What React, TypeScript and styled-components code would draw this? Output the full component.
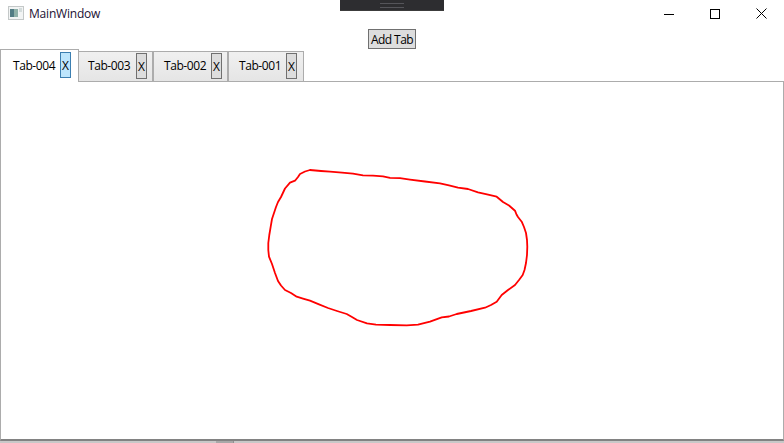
import React from "react";
import styled, { createGlobalStyle } from "styled-components";

const Global = createGlobalStyle`
  html, body { margin: 0; padding: 0; background: #fff; overflow: hidden; }
  #root { width: 784px; height: 443px; }
`;

const Win = styled.div`
  position: relative;
  width: 784px;
  height: 443px;
  display: flex;
  flex-direction: column;
  background: #fff;
  font-family: "Open Sans", "Noto Sans", sans-serif;
  font-size: 12px;
  color: #000;
  overflow: hidden;
`;

const TitleBar = styled.div`
  height: 29px;
  flex: none;
  display: flex;
  align-items: flex-start;
  padding-left: 8px;
`;

const AppIcon = styled.svg`
  width: 16px;
  height: 14px;
  margin-top: 6px;
  flex: none;
`;

const Title = styled.span`
  margin-left: 5px;
  margin-top: 6px;
  line-height: 16px;
  color: #1a1033;
  letter-spacing: -0.2px;
`;

const WinControls = styled.div`
  margin-left: auto;
  display: flex;
`;

const WinButton = styled.div`
  width: 46px;
  height: 27px;
  display: flex;
  align-items: center;
  justify-content: center;
`;

const Handle = styled.div`
  position: absolute;
  top: 0;
  left: 340px;
  width: 104px;
  height: 11px;
  background: #2d2d30;
  border-bottom: 1px solid #3c3c3c;
  box-sizing: border-box;
  display: flex;
  justify-content: center;
`;

const Grip = styled.div`
  width: 24px;
  height: 3px;
  margin-top: 3px;
  border-top: 1px solid #55555a;
  border-bottom: 1px solid #55555a;
`;

const Toolbar = styled.div`
  height: 20px;
  flex: none;
  display: flex;
  justify-content: center;
`;

const AddButton = styled.div`
  width: 48px;
  height: 20px;
  box-sizing: border-box;
  padding-top: 2px;
  border: 1px solid #707070;
  background: #dddddd;
  display: flex;
  align-items: center;
  justify-content: center;
  white-space: nowrap;
  letter-spacing: -0.55px;
  line-height: 16px;
`;

const TabStrip = styled.div`
  height: 33px;
  flex: none;
  display: flex;
  align-items: flex-start;
  margin-bottom: -1px;
  position: relative;
  z-index: 1;
`;

const Tab = styled.div<{ $active?: boolean; $width: number; $pad: number }>`
  width: ${(p) => p.$width}px;
  height: ${(p) => (p.$active ? 33 : 31)}px;
  margin-top: ${(p) => (p.$active ? 0 : 2)}px;
  margin-right: ${(p) => (p.$active ? -1 : 0)}px;
  box-sizing: border-box;
  border: 1px solid #acacac;
  border-bottom: ${(p) => (p.$active ? "none" : "1px solid #acacac")};
  background: ${(p) => (p.$active ? "#fff" : "linear-gradient(#f0f0f0, #e5e5e5)")};
  position: relative;
  z-index: ${(p) => (p.$active ? 2 : 1)};
  display: flex;
  align-items: center;
  padding-left: ${(p) => p.$pad}px;
  padding-bottom: ${(p) => (p.$active ? 2 : 1)}px;
`;

const TabLabel = styled.span<{ $width: number; $active?: boolean }>`
  width: ${(p) => p.$width}px;
  margin-top: ${(p) => (p.$active ? 2 : 0)}px;
  flex: none;
  white-space: nowrap;
  letter-spacing: -0.42px;
  line-height: 16px;
`;

const CloseButton = styled.div<{ $active?: boolean }>`
  width: 11px;
  height: 26px;
  box-sizing: border-box;
  border: 1px solid ${(p) => (p.$active ? "#3c7fb1" : "#707070")};
  background: ${(p) => (p.$active ? "#bee6fd" : "#dddddd")};
  display: flex;
  align-items: center;
  justify-content: center;
  flex: none;
`;

const Panel = styled.div`
  flex: 1;
  min-height: 0;
  border: 1px solid #acacac;
  border-bottom: 2px solid #828282;
  background: #fff;
`;

const Sketch = styled.svg`
  display: block;
  width: 100%;
  height: 100%;
`;

const BottomStrip = styled.div`
  height: 2px;
  flex: none;
  background: #c8c8c8;
  display: flex;
  padding-left: 216px;
`;

const StripThumb = styled.div`
  width: 17px;
  height: 2px;
  background: #a8a8a8;
  border-right: 1px solid #909090;
`;

const points = [
  [310,170],[321,171],[330,171.7],[342,172.6],[353,173.7],[363,175.3],[373,175.7],[383,176.3],[390,177.8],[400,178.2],[410,179.6],[425,181.5],[440,183.3],[449,185.4],[458,187.7],[468,189],[478,192.3],[487,194.3],[496.7,196.7],[503,202],[509,205.5],[515,210.7],[516.5,214.5],[518,217],[521.7,221.7],[524,227],[526,233],[527,240],[527.3,246.7],[527,255],[526,263],[524.5,270],[522.7,275],[519,280],[515,285],[508,290],[501.7,295],[496.7,301.7],[491,305],[485,307.7],[471,311],[456.7,314],[449,316.5],[441.7,317.3],[430,321.7],[418,324.7],[406.7,325.3],[390,325],[376,324.6],[367,323.4],[357,320],[352,317],[346.7,314],[337,311],[328,308],[319,304.4],[310,300.7],[303,298.6],[296.7,296.7],[291,293],[285,290],[281,285.5],[278,281],[275,273],[272,264],[269,256.7],[268.3,250],[268.3,243],[269.3,235],[270.7,226.7],[272,219],[274,213],[276,207],[278,202],[281,197],[285,188.5],[290,182.7],[295,180.7],[298,177],[300,174],[305,171.5],[310,170],
];

const tabs = [
  { name: "Tab-003", width: 75, pad: 9, label: 48 },
  { name: "Tab-002", width: 75, pad: 10, label: 47 },
  { name: "Tab-001", width: 76, pad: 10, label: 47 },
];

export default function App() {
  return (
    <Win>
      <Global />
      <TitleBar>
        <AppIcon viewBox="0 0 16 14">
          <rect x="0.5" y="0.5" width="15" height="13" fill="#f2f4f4" stroke="#c4c8c8" />
          <rect x="2" y="3" width="8" height="8" fill="#8fb0a8" />
          <rect x="2" y="3" width="4" height="8" fill="#527c84" />
          <rect x="11" y="2" width="3" height="4" fill="#d4dcdc" />
        </AppIcon>
        <Title>MainWindow</Title>
        <WinControls>
          <WinButton>
            <svg width="10" height="10" viewBox="0 0 10 10"><path d="M0 5.5H10" stroke="#000" strokeWidth="1" /></svg>
          </WinButton>
          <WinButton>
            <svg width="10" height="10" viewBox="0 0 10 10"><rect x="0.5" y="0.5" width="9" height="9" fill="none" stroke="#000" /></svg>
          </WinButton>
          <WinButton>
            <svg width="11" height="11" viewBox="0 0 11 11"><path d="M0.5 0.5L10.5 10.5M10.5 0.5L0.5 10.5" stroke="#000" strokeWidth="1" fill="none" /></svg>
          </WinButton>
        </WinControls>
      </TitleBar>
      <Handle><Grip /></Handle>
      <Toolbar><AddButton>Add Tab</AddButton></Toolbar>
      <TabStrip>
        <Tab $active $width={79} $pad={12}>
          <TabLabel $active $width={47}>Tab-004</TabLabel>
          <CloseButton $active>X</CloseButton>
        </Tab>
        {tabs.map((t) => (
          <Tab key={t.name} $width={t.width} $pad={t.pad}>
            <TabLabel $width={t.label}>{t.name}</TabLabel>
            <CloseButton>X</CloseButton>
          </Tab>
        ))}
      </TabStrip>
      <Panel>
        <Sketch viewBox="1 82 782 357">
          <polyline
            points={points.map((p) => p.join(",")).join(" ")}
            fill="none"
            stroke="#ff0000"
            strokeWidth="1.8"
            strokeLinejoin="round"
            strokeLinecap="round"
          />
        </Sketch>
      </Panel>
      <BottomStrip><StripThumb /></BottomStrip>
    </Win>
  );
}
